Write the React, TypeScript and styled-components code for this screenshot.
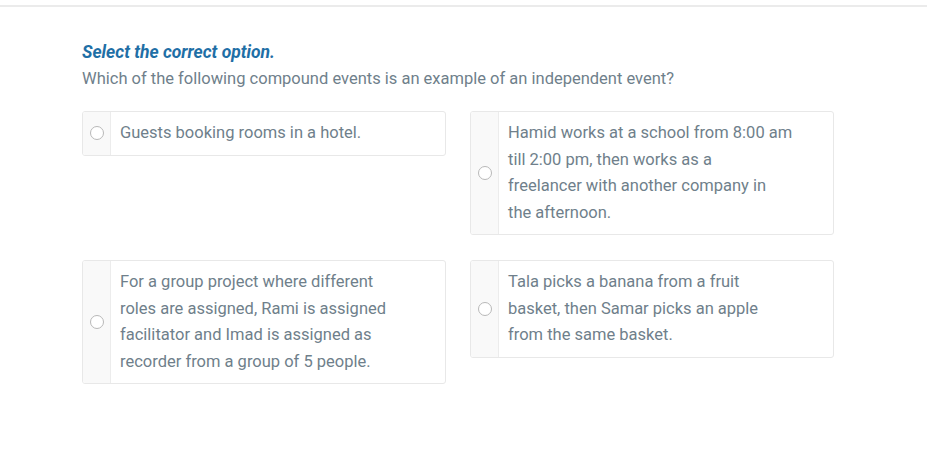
import React from 'react';
import styled, { createGlobalStyle } from 'styled-components';

const GlobalStyle = createGlobalStyle`
    html, body {
        margin: 0;
        padding: 0;
        background: #ffffff;
    }
    body {
        font-family: Roboto, "Noto Sans", Arial, sans-serif;
    }
`;

interface Option {
    id: string;
    lines: string[];
}

// lines are kept as in the original wrapping
const options: Option[] = [
    { id: 'a', lines: ['Guests booking rooms in a hotel.'] },
    {
        id: 'b',
        lines: [
            'Hamid works at a school from 8:00 am',
            'till 2:00 pm, then works as a',
            'freelancer with another company in',
            'the afternoon.',
        ],
    },
    {
        id: 'c',
        lines: [
            'For a group project where different',
            'roles are assigned, Rami is assigned',
            'facilitator and Imad is assigned as',
            'recorder from a group of 5 people.',
        ],
    },
    {
        id: 'd',
        lines: ['Tala picks a banana from a fruit', 'basket, then Samar picks an apple', 'from the same basket.'],
    },
];

export default function App(): JSX.Element {
    return (
        <>
            <GlobalStyle />
            <S_Page>
                <S_Question>
                    <S_Instruction>Select the correct option.</S_Instruction>
                    <S_Prompt>Which of the following compound events is an example of an independent event?</S_Prompt>
                    <S_Options>
                        {options.map((option) => (
                            <S_Option key={option.id}>
                                <S_RadioCell>
                                    <S_Radio />
                                </S_RadioCell>
                                <S_OptionText>{option.lines.join('\n')}</S_OptionText>
                            </S_Option>
                        ))}
                    </S_Options>
                </S_Question>
            </S_Page>
        </>
    );
}

const S_Page = styled.div`
    margin-top: 5px;
    border-top: 2px solid #ebebeb;
    min-height: 468px;
`;

const S_Question = styled.div`
    padding: 32px 0 0 82px;
    width: 752px;
`;

const S_Instruction = styled.div`
    font-size: 17.5px;
    line-height: 26px;
    font-weight: 700;
    font-style: italic;
    color: #1f6fa6;
`;

const S_Prompt = styled.div`
    font-size: 16.5px;
    line-height: 27px;
    color: #6f7f8b;
`;

const S_Options = styled.div`
    margin-top: 19px;
    display: grid;
    grid-template-columns: 364px 364px;
    column-gap: 24px;
    row-gap: 25px;
    align-items: start;
`;

const S_Option = styled.label`
    display: flex;
    border: 1px solid #e8e8e8;
    border-radius: 3px;
    overflow: hidden;
    cursor: pointer;
`;

const S_RadioCell = styled.div`
    flex: 0 0 27px;
    display: flex;
    align-items: center;
    justify-content: center;
    background: #f9f9f9;
    border-right: 1px solid #ececec;
`;

const S_Radio = styled.span`
    width: 12px;
    height: 12px;
    border-radius: 50%;
    border: 1px solid #b8b8b8;
    background: #ffffff;
`;

const S_OptionText = styled.div`
    flex: 1;
    padding: 8px 9px;
    font-size: 16.5px;
    line-height: 26.5px;
    color: #6f7f8b;
    white-space: pre-line;
`;
